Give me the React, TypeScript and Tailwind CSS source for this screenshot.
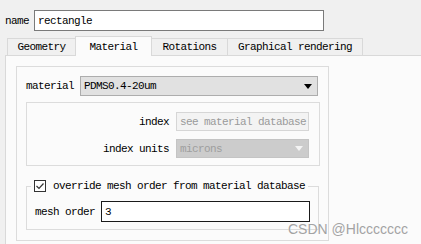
import React from "react";

const mono = { fontFamily: '"Liberation Mono", "DejaVu Sans Mono", monospace' };

function Caret({ color }: { color: string }) {
  return (
    <svg width="8" height="5" viewBox="0 0 8 5" className="shrink-0">
      <path d="M0 0 H8 L4 5 Z" fill={color} />
    </svg>
  );
}

function Tab({ label, active, className }: { label: string; active?: boolean; className: string }) {
  return (
    <div
      className={
        "flex items-center justify-center border-[#d9d9d9] " +
        (active ? "h-[20px] -mb-px bg-[#fbfbfb] relative z-10 " : "h-[17px] bg-[#f0f0f0] ") +
        className
      }
    >
      {label}
    </div>
  );
}

export default function App() {
  return (
    <div
      className="relative w-[421px] h-[244px] overflow-hidden bg-[#f0f0f0] text-[11px] leading-[12px] tracking-[-0.6px] text-black flex flex-col"
      style={mono}
    >
      {/* name row */}
      <div className="flex items-center pt-[10px] pl-[5px]">
        <span className="w-[29px]">name</span>
        <div className="w-[290px] h-[21px] border border-[#7a7a7a] bg-white flex items-center pl-[3px]">
          rectangle
        </div>
      </div>

      {/* tabs */}
      <div className="flex items-end h-[20px] mt-[5px] pl-[7px]">
        <Tab label="Geometry" className="w-[68px] border-l border-t" />
        <Tab label="Material" active className="w-[77px] border-l border-t border-r" />
        <Tab label="Rotations" className="w-[75px] border-t" />
        <Tab label="Graphical rendering" className="w-[136px] border-l border-t border-r" />
      </div>

      {/* tab panel */}
      <div className="flex-1 ml-[5px] border-t border-l border-[#d9d9d9] bg-[#fbfbfb] pt-[10px] pl-[10px]">
        <div className="w-[313px] border border-[#dcdcdc] pt-[9px] pl-[9px] pb-[10px]">
          {/* material */}
          <div className="flex items-center h-[20px]">
            <span className="w-[54px]">material</span>
            <div className="w-[238px] h-[20px] border border-[#adadad] bg-[#e1e1e1] flex items-center justify-between pl-[3px] pr-[5px]">
              <span>PDMS0.4-20um</span>
              <Caret color="#000" />
            </div>
          </div>

          {/* index box */}
          <div className="w-[294px] h-[64px] mt-[6px] border border-[#dcdcdc] pt-[9px] pr-[10px] flex flex-col items-end gap-[8px]">
            <div className="flex items-center gap-[7px]">
              <span>index</span>
              <div className="w-[133px] h-[19px] border border-[#d6d6d6] bg-[#f3f3f3] text-[#9a9a9a] flex items-center pl-[3px]">
                see material database
              </div>
            </div>
            <div className="flex items-center gap-[7px]">
              <span>index units</span>
              <div className="w-[133px] h-[19px] border border-[#c4c4c4] bg-[#cccccc] text-[#9e9e9e] flex items-center justify-between pl-[3px] pr-[5px]">
                <span>microns</span>
                <Caret color="#f4f4f4" />
              </div>
            </div>
          </div>

          {/* override group */}
          <fieldset className="w-[293px] mt-[14px] border border-[#dcdcdc] pb-[7px]">
            <legend className="ml-[4px] px-[3px] flex items-center gap-[7px] bg-[#fbfbfb]">
              <svg width="12" height="12" viewBox="0 0 12 12" className="shrink-0">
                <rect x="0.5" y="0.5" width="11" height="11" fill="#fff" stroke="#333" />
                <path d="M2.5 6 L5 8.5 L9.5 3.5" fill="none" stroke="#333" strokeWidth="1.2" />
              </svg>
              <span>override mesh order from material database</span>
            </legend>
            <div className="flex items-center pl-[8px] pt-[9px]">
              <span className="w-[66px]">mesh order</span>
              <div className="w-[209px] h-[21px] border border-[#1a1a1a] bg-white flex items-center pl-[3px]">
                3
              </div>
            </div>
          </fieldset>
        </div>
        <div className="pl-[19px] mt-[3px]">grid attribute name</div>
      </div>

      {/* watermark */}
      <div
        className="absolute left-[288px] top-[220px] text-[14px] leading-[18px] tracking-normal text-[#a3a3a3]"
        style={{ fontFamily: '"Liberation Sans", Arial, sans-serif', textShadow: "0 0 1px #fff" }}
      >
        CSDN @Hlccccccc
      </div>
    </div>
  );
}
